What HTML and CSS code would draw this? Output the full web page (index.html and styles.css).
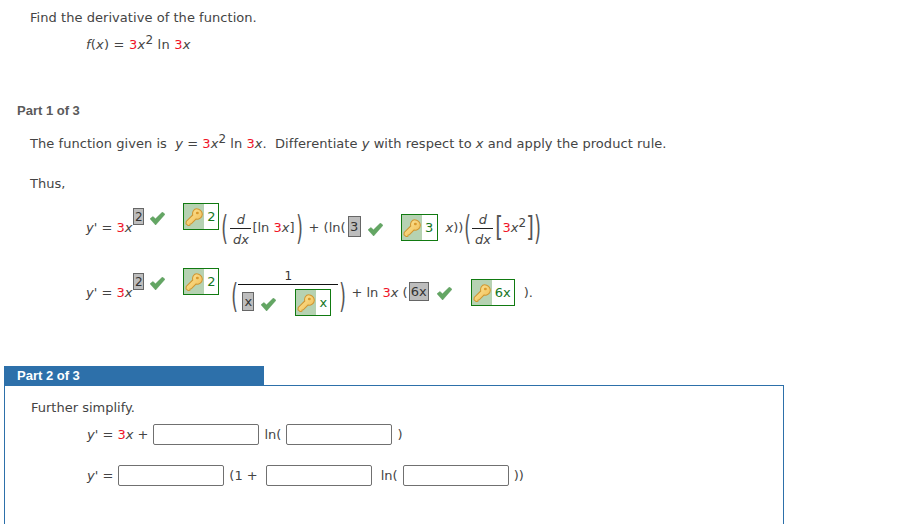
FILE: index.html
```html
<!DOCTYPE html>
<html lang="en">
<head>
<meta charset="utf-8">
<title>Derivative</title>
<link rel="stylesheet" href="styles.css">
</head>
<body>
<svg class="defs" width="0" height="0" aria-hidden="true">
  <defs>
    <linearGradient id="gold" x1="0" y1="0" x2="1" y2="1">
      <stop offset="0" stop-color="#fdeaa0"/>
      <stop offset="1" stop-color="#efb84c"/>
    </linearGradient>
    <symbol id="key" viewBox="0 0 16 16">
      <path d="M10.300 .6c2.700 0 5.100 2.400 5.100 4.900 0 2.900-3 5-5.700 4.300L5.600 14l-1 .1-.3 1.200-1.500.300-1.900-1.500.2-2.100 5.800-5.800C6.200 3.500 7.900 .6 10.300 .6z" fill="url(#gold)" stroke="#d0952f" stroke-width=".9"/>
      <ellipse cx="11" cy="4.400" rx="1.300" ry="1.100" fill="#d9992c"/>
    </symbol>
    <symbol id="check" viewBox="0 0 15 13">
      <path d="M0 6.800 L2.900 4.400 L5.500 6.800 L12.400 0 L15 2.300 L5.600 13 Z" fill="#63a663" stroke="#4f9150" stroke-width=".4"/>
    </symbol>
  </defs>
</svg>

<main class="page">
  <p class="prompt">Find the derivative of the function.</p>
  <p class="given"><i>f</i>(<i>x</i>) = <span class="r">3</span><i>x</i><sup>2</sup> ln <span class="r">3</span><i>x</i></p>

  <h2 class="part-title">Part 1 of 3</h2>
  <p class="intro">The function given is &nbsp;<i>y</i> = <span class="r">3</span><i>x</i><sup>2</sup> ln <span class="r">3</span><i>x</i>.&nbsp; Differentiate <i>y</i> with respect to <i>x</i> and apply the product rule.</p>
  <p class="thus">Thus,</p>

  <div class="eq eq-a">
    <span class="t a1"><i>y'</i> = <span class="r">3</span><i>x</i></span>
    <span class="grey sup">2</span>
    <svg class="check c-sup"><use href="#check"/></svg>
    <span class="answer a-key"><span class="key-cell"><svg class="key"><use href="#key"/></svg></span><span class="val">2</span></span>
    <span class="paren a-p1">(</span>
    <span class="frac a-f1"><i class="num">d</i><i class="den">dx</i></span>
    <span class="t a2">[ln <span class="r">3</span><i>x</i>]</span>
    <span class="paren a-p2">)</span>
    <span class="t a3">+ (ln(</span>
    <span class="grey g3">3</span>
    <svg class="check a-c3"><use href="#check"/></svg>
    <span class="answer a-key3"><span class="key-cell"><svg class="key"><use href="#key"/></svg></span><span class="val">3</span></span>
    <span class="t a4"><i>x</i>))</span>
    <span class="paren a-p3">(</span>
    <span class="frac a-f2"><i class="num">d</i><i class="den">dx</i></span>
    <span class="bracket a-b1">[</span>
    <span class="t a5"><span class="r">3</span><i>x</i><sup>2</sup></span>
    <span class="bracket a-b2">]</span>
    <span class="paren a-p4">)</span>
  </div>

  <div class="eq eq-b">
    <span class="t b1"><i>y'</i> = <span class="r">3</span><i>x</i></span>
    <span class="grey sup">2</span>
    <svg class="check c-sup"><use href="#check"/></svg>
    <span class="answer a-key"><span class="key-cell"><svg class="key"><use href="#key"/></svg></span><span class="val">2</span></span>
    <span class="paren b-p1">(</span>
    <span class="big-frac">
      <span class="one">1</span>
      <span class="big-den">
        <span class="grey gx">x</span>
        <svg class="check b-c2"><use href="#check"/></svg>
        <span class="answer b-key2"><span class="key-cell"><svg class="key"><use href="#key"/></svg></span><span class="val">x</span></span>
      </span>
    </span>
    <span class="paren b-p2">)</span>
    <span class="t b2">+ ln <span class="r">3</span><i>x</i> (</span>
    <span class="grey g6">6x</span>
    <svg class="check b-c3"><use href="#check"/></svg>
    <span class="answer b-key3"><span class="key-cell"><svg class="key"><use href="#key"/></svg></span><span class="val">6x</span></span>
    <span class="t b3">).</span>
  </div>

  <section class="part-two">
    <h2 class="tab">Part 2 of 3</h2>
    <div class="panel">
      <p class="further">Further simplify.</p>
      <div class="line line-1">
        <span class="t"><i>y'</i> = <span class="r">3</span><i>x</i> +</span>
        <input class="box" type="text" aria-label="coefficient">
        <span class="t">ln(</span>
        <input class="box" type="text" aria-label="argument">
        <span class="t">)</span>
      </div>
      <div class="line line-2">
        <span class="t"><i>y'</i> =</span>
        <input class="box" type="text" aria-label="factor">
        <span class="t">(1 +</span>
        <input class="box w-gap" type="text" aria-label="coefficient two">
        <span class="t w-gap2">ln(</span>
        <input class="box" type="text" aria-label="argument two">
        <span class="t">))</span>
      </div>
    </div>
  </section>
</main>
</body>
</html>
```

FILE: styles.css
```css
* { box-sizing: border-box; }
html, body { margin: 0; height: 524px; overflow: hidden; background: #fff; }
body { font: 13px/16px "DejaVu Sans", Verdana, sans-serif; color: #444; }
.defs { position: absolute; }
p, h2 { margin: 0; }
i { font-style: italic; }
.r { color: #f01428; }
sup { font-size: 12px; line-height: 0; vertical-align: 5px; }

.page { width: 918px; padding-top: 10px; }
.prompt, .intro { letter-spacing: .05px; }
.prompt { margin-left: 30px; }
.given { margin: 11px 0 0 86px; letter-spacing: .2px; }
.part-title, .tab { font: bold 13px/16px "Liberation Sans", Arial, sans-serif; }
.part-title { margin: 50px 0 0 17px; color: #5a5a5a; }
.intro { margin: 17px 0 0 30px; }
.thus { margin: 24px 0 0 30px; }

.eq { display: flex; align-items: flex-start; margin-left: 86px; }
.eq-a { margin-top: 11px; height: 43px; }
.eq-b { margin-top: 22px; height: 47px; }
.t { white-space: pre; display: block; }

.grey {
  display: flex; align-items: center; justify-content: center;
  background: #bdbdbd; border: 1px solid #666; color: #333;
  height: 19px; line-height: 16px;
}
.sup { width: 11px; height: 17px; font-size: 12px; margin: 5px 0 0 1px; }
.check { width: 15px; height: 13px; display: block; flex: none; }
.c-sup { margin: 9px 0 0 6px; }
.answer {
  display: flex; height: 27px; border: 1px solid #117a11; background: #fff;
  color: #14761e; line-height: 25px;
}
.key-cell { width: 20px; background: #b6d2b2; display: flex; align-items: center; justify-content: center; }
.key { width: 18px; height: 18px; display: block; }
.val { padding: 0 3px; flex: 1; text-align: center; }
.a-key { width: 36px; margin-left: 18px; }
.paren { font-size: 34px; line-height: 34px; color: #555; transform: scaleX(.5); width: 7px; display: flex; justify-content: center; }
.bracket { font-size: 28px; line-height: 32px; color: #555; width: 6px; display: flex; justify-content: center; transform: scaleX(.7); }
.frac { display: flex; flex-direction: column; align-items: center; width: 21px; line-height: 15px; }
.num { display: block; height: 16px; }
.den { display: block; width: 100%; border-top: 1px solid #222; text-align: center; padding-top: 3px; }

.a1, .b1 { margin-top: 17px; }
.a-p1 { margin: 8px 0 0 2px; }
.a-f1 { margin: 9px 0 0 2px; }
.a2 { margin: 17px 0 0 1px; }
.a-p2 { margin: 8px 0 0 1px; }
.a3 { margin: 17px 0 0 6px; }
.g3 { width: 13px; height: 21px; margin: 13px 0 0 2px; }
.a-c3 { margin: 20px 0 0 7px; }
.a-key3 { width: 37px; margin: 11px 0 0 18px; }
.a4 { margin: 17px 0 0 8px; }
.a-p3 { margin: 8px 0 0 1px; }
.a-f2 { margin: 9px 0 0 1px; }
.a-b1 { margin: 9px 0 0 3px; }
.a5 { margin: 17px 0 0 0; }
.a-b2 { margin: 9px 0 0 1px; }
.a-p4 { margin: 8px 0 0 1px; }

.b-p1 { margin: 11px 0 0 12px; }
.big-frac { width: 100px; display: flex; flex-direction: column; align-items: stretch; }
.one { text-align: center; height: 17px; font-size: 12px; line-height: 16px; color: #333; border-bottom: 1px solid #111; }
.big-den { display: flex; align-items: flex-start; }
.gx { width: 12px; height: 19px; margin: 7px 0 0 4px; }
.b-c2 { margin: 13px 0 0 7px; }
.b-key2 { width: 36px; margin: 4px 0 0 19px; }
.b-p2 { margin: 11px 0 0 1px; }
.b2 { margin: 17px 0 0 5px; }
.g6 { width: 20px; margin: 14px 0 0 1px; }
.b-c3 { margin: 19px 0 0 8px; }
.b-key3 { width: 44px; margin: 11px 0 0 19px; }
.b3 { margin: 17px 0 0 9px; }

.part-two { margin: 51px 0 0 4px; width: 780px; }
.tab { width: 260px; height: 20px; background: #2d70aa; color: #fff; padding: 2px 0 0 13px; }
.panel { border: 1px solid #2d70aa; border-bottom: 0; height: 200px; padding: 14px 0 0 26px; margin-top: -1px; }
.line { display: flex; align-items: center; gap: 5px; height: 21px; }
.line-1 { margin: 8px 0 0 56px; }
.line-2 { margin: 20px 0 0 56px; }
.box { width: 106px; height: 21px; border: 1px solid #707070; border-radius: 2px; background: #fff; padding: 0; margin: 0; }
.w-gap { margin-left: 3px; }
.w-gap2 { margin-left: 4px; }
```
